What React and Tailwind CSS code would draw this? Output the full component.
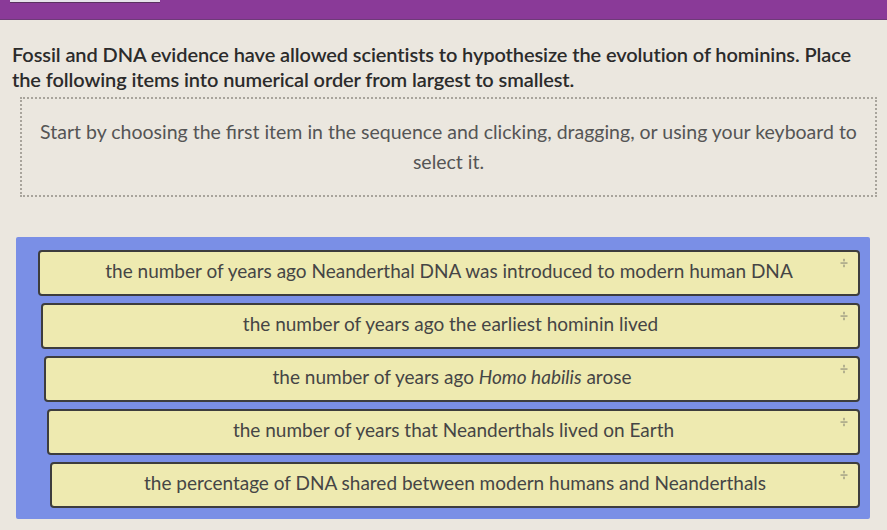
import React from "react";

const Handle = () => (
  <svg width="8" height="10" viewBox="0 0 8 10" className="absolute right-[10px] top-[6px]">
    <rect x="0.5" y="4.4" width="7" height="1.3" fill="#9a9880" />
    <rect x="3.3" y="0.8" width="1.4" height="2.6" fill="#9a9880" />
    <rect x="3.3" y="6.6" width="1.4" height="2.6" fill="#9a9880" />
  </svg>
);

const Item = ({ children, ml }) => (
  <div className={`relative h-[46px] rounded-[4px] border-2 border-[#3d3d3d] bg-[#eeeab0] flex items-center justify-center text-[19px] text-[#454545] ${ml}`}>
    <span className="-mt-[4px]">{children}</span>
    <Handle />
  </div>
);

export default function App() {
  return (
    <div className="w-[887px] h-[530px] overflow-hidden bg-[#ebe7df] relative" style={{ fontFamily: "Lato, 'Open Sans', sans-serif" }}>
      <div className="h-[20px] bg-[#8a3a98] relative border-b border-[#6e3a78]">
        <div className="absolute left-[10px] top-0 w-[150px] h-[3px] bg-[#e6e2ea] border-b border-[#5a3060]" />
      </div>
      <div className="pl-[12px] pr-[25px] pt-[22px] text-[20px] tracking-[-0.1px] leading-[25px] font-semibold text-[#2b2b2b]">
        Fossil and DNA evidence have allowed scientists to hypothesize the evolution of hominins. Place the following items into numerical order from largest to smallest.
      </div>
      <div className="ml-[20px] mr-[10px] mt-[5px] h-[100px] border-2 border-dotted border-[#a8a49c] flex items-center justify-center px-[14px] text-center text-[19.5px] leading-[30px] text-[#555]">
        Start by choosing the first item in the sequence and clicking, dragging, or using your keyboard to select it.
      </div>
      <div className="ml-[16px] mr-[17px] mt-[40px] h-[282px] bg-[#7a8fe6] rounded-[2px] pl-[22px] pr-[10px] pt-[13px] flex flex-col gap-[7px]">
        <Item ml="ml-0">the number of years ago Neanderthal DNA was introduced to modern human DNA</Item>
        <Item ml="ml-[3px]">the number of years ago the earliest hominin lived</Item>
        <Item ml="ml-[6px]">the number of years ago <i>Homo habilis</i>&nbsp;arose</Item>
        <Item ml="ml-[9px]">the number of years that Neanderthals lived on Earth</Item>
        <Item ml="ml-[12px]">the percentage of DNA shared between modern humans and Neanderthals</Item>
      </div>
    </div>
  );
}
